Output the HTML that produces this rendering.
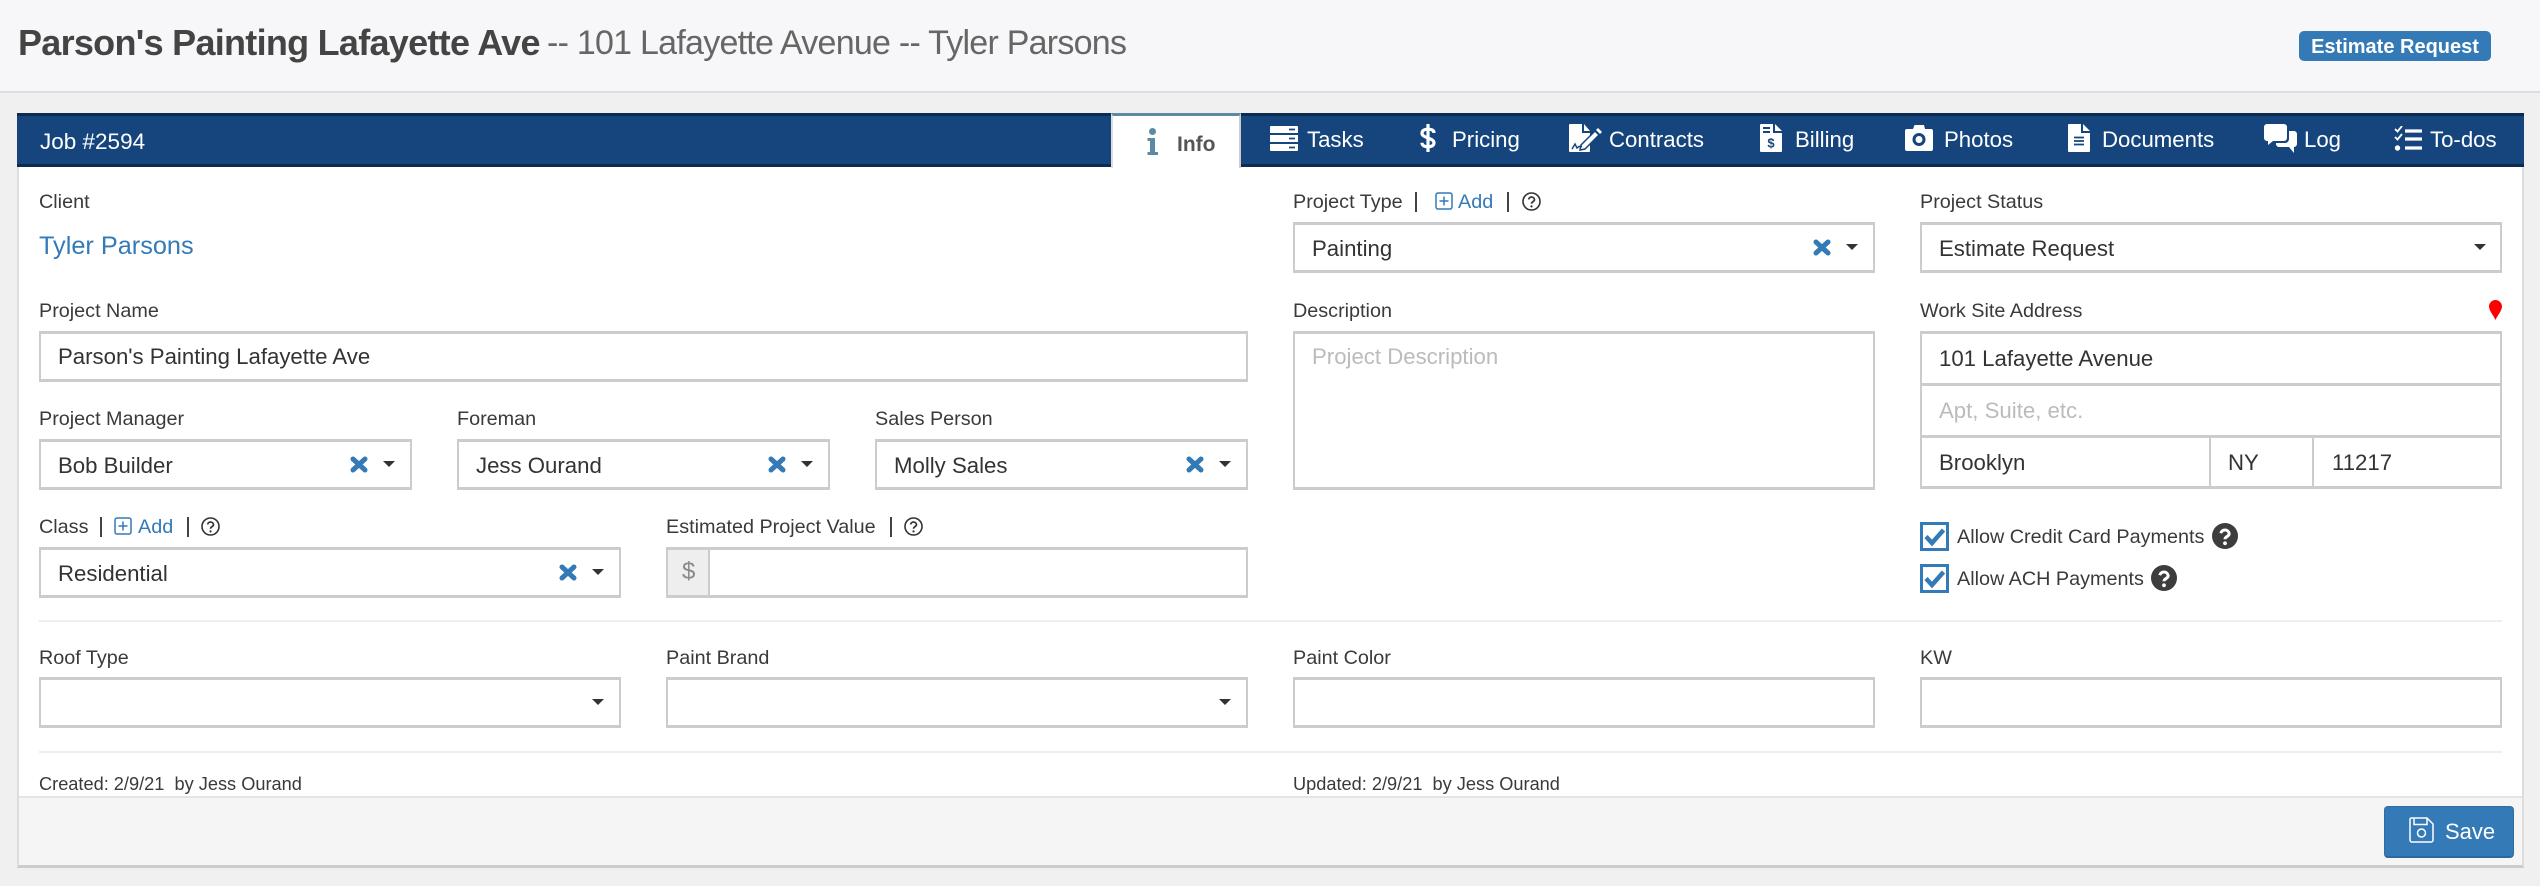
<!DOCTYPE html>
<html><head><meta charset="utf-8"><title>Job</title>
<style>
html,body{margin:0;padding:0;width:2540px;height:886px;overflow:hidden;background:#f0f0f0;font-family:"Liberation Sans",sans-serif;color:#333}
div,span,svg{position:absolute;box-sizing:border-box}
.t{white-space:nowrap;height:24px;line-height:24px}
.l{font-size:19.8px;color:#3a3a3a;margin-top:1px}
.v{font-size:22.2px;color:#333;margin-top:2px}
.i{margin-top:1px}
.p{font-size:22.2px;color:#bbb}
.n{font-size:22.2px;color:#fff}
.b{background:#fff;border:solid #ccc;border-width:3px 2px}
.hr{left:39px;width:2463px;height:2px;background:#eee}
.bar{width:2px;height:20px;background:#444}
</style></head><body>
<svg width="0" height="0" style="position:absolute">
<defs>
<symbol id="x" viewBox="0 0 18 17"><path d="M3 3 15 14M15 3 3 14" stroke="#337ab7" stroke-width="5" stroke-linecap="round" fill="none"/></symbol>
<symbol id="c" viewBox="0 0 12 6"><path d="M0 0H12L6 6Z" fill="#333"/></symbol>
<symbol id="q" viewBox="0 0 19 19"><circle cx="9.5" cy="9.5" r="8.5" fill="none" stroke="#333" stroke-width="1.6"/><path d="M6.6 7.4a3 3 0 0 1 5.9.2c0 2-3 2.2-3 4.2" fill="none" stroke="#333" stroke-width="1.7"/><circle cx="9.5" cy="14.4" r="1.1" fill="#333"/></symbol>
<symbol id="a" viewBox="0 0 18 18"><rect x="1" y="1" width="16" height="16" rx="2" fill="none" stroke="#337ab7" stroke-width="1.5"/><path d="M9 4.5v9M4.5 9h9" stroke="#337ab7" stroke-width="1.5"/></symbol>
<symbol id="ck" viewBox="0 0 29 29"><rect x="1.5" y="1.5" width="26" height="26" fill="#fff" stroke="#337ab7" stroke-width="3"/><path d="M6 14.500 12 21 23.500 8" fill="none" stroke="#337ab7" stroke-width="4.500"/></symbol>
<symbol id="qq" viewBox="0 0 26 26"><circle cx="13" cy="13" r="13" fill="#3d3d3d"/><path d="M8.800 10.200a4.300 4.300 0 0 1 8.400.4c0 3-4.200 2.900-4.200 5.600" fill="none" stroke="#fff" stroke-width="3"/><circle cx="13" cy="20.300" r="1.900" fill="#fff"/></symbol>
</defs></svg>

<!-- header -->
<div style="left:0;top:0;width:2540px;height:93px;background:#f7f7f9;border-bottom:2px solid #dcdde3"></div>
<span class="t" style="left:18px;top:26px;height:34px;line-height:34px;font-size:36px;font-weight:bold;color:#444;letter-spacing:-.72px">Parson's Painting Lafayette Ave</span>
<span class="t" style="left:547px;top:26px;height:34px;line-height:34px;font-size:34px;color:#666;letter-spacing:-.75px">-- 101 Lafayette Avenue -- Tyler Parsons</span>
<div style="left:2299px;top:31px;width:192px;height:30px;background:#337ab7;border-radius:5px"></div>
<span class="t" style="left:2299px;width:192px;text-align:center;top:35px;font-size:20px;font-weight:bold;color:#fff">Estimate Request</span>

<!-- panel -->
<div style="left:17px;top:113px;width:2507px;height:755px;background:#fff;border:2px solid #ddd;border-bottom:3px solid #ccc;border-top:0"></div>
<div style="left:17px;top:113px;width:2507px;height:54px;background:#15457c;border-top:3px solid #0d2b4e;border-bottom:3px solid #0d2b4e"></div>
<span class="t" style="left:40px;top:130px;font-size:22.500px;color:#fff">Job #2594</span>

<!-- tab active -->
<div style="left:1111px;top:113px;width:130px;height:55px;background:#fff;border-top:3px solid #5a8ba3;border-right:2px solid #ccc;border-left:2px solid #ddd"></div>
<svg style="left:1146px;top:128px" width="13" height="27" viewBox="0 0 13 27"><circle cx="6.500" cy="3.500" r="3.500" fill="#5a8ba3"/><path d="M1.500 10H9V24H12V27H1.500V24H4V13H1.500Z" fill="#5a8ba3"/></svg>
<span class="t" style="left:1177px;top:133px;font-size:21px;font-weight:bold;color:#555">Info</span>

<!-- tabs -->
<svg style="left:1270px;top:126px" width="28" height="25" viewBox="0 0 28 25"><path d="M1 0H27a1 1 0 0 1 1 1V7H0V1a1 1 0 0 1 1-1ZM0 9H28V16H0ZM0 18H28V24a1 1 0 0 1-1 1H1a1 1 0 0 1-1-1Z" fill="#fff"/><path d="M19 3.500H25M19 12.500H25M19 21.500H25" stroke="#15457c" stroke-width="1.800"/></svg>
<span class="t n" style="left:1307px;top:128px">Tasks</span>
<svg style="left:1420px;top:124px" width="16" height="28" viewBox="0 0 16 28"><path d="M14 9C14 6 11 5.200 8 5.200S2 6.200 2 9.200s4 3.800 6 4.800 6 1.800 6 4.800-3 4-6 4-6-1-6-4M8 0V28" fill="none" stroke="#fff" stroke-width="3.200"/></svg>
<span class="t n" style="left:1452px;top:128px">Pricing</span>
<svg style="left:1569px;top:124px" width="33" height="28" viewBox="0 0 33 28"><path d="M1 0H13V9H21V27a1 1 0 0 1-1 1H1a1 1 0 0 1-1-1V1a1 1 0 0 1 1-1ZM15 0 21 7H15Z" fill="#fff"/><path d="M12 21 26 7 30 11 16 25 11 26Z" fill="#fff" stroke="#15457c" stroke-width="1.500"/><path d="M27 6 29 4 33 8 31 10Z" fill="#fff"/><path d="M3 25 6 20 8 24 10 22.500H13" stroke="#15457c" stroke-width="1.500" fill="none"/></svg>
<span class="t n" style="left:1609px;top:128px">Contracts</span>
<svg style="left:1760px;top:124px" width="22" height="28" viewBox="0 0 22 28"><path d="M1 0H13V9H22V27a1 1 0 0 1-1 1H1a1 1 0 0 1-1-1V1a1 1 0 0 1 1-1ZM15 0 22 7H15Z" fill="#fff"/><path d="M3 4H10M3 8H10" stroke="#15457c" stroke-width="2"/><text x="11" y="23.500" text-anchor="middle" font-family="Liberation Sans" font-weight="bold" font-size="13" fill="#15457c">$</text></svg>
<span class="t n" style="left:1795px;top:128px">Billing</span>
<svg style="left:1905px;top:125px" width="28" height="26" viewBox="0 0 28 26"><path d="M2 4H8L9.500 0H19L20 4H26a2 2 0 0 1 2 2V24a2 2 0 0 1-2 2H2a2 2 0 0 1-2-2V6a2 2 0 0 1 2-2Z" fill="#fff"/><circle cx="14" cy="14.500" r="5" fill="none" stroke="#15457c" stroke-width="3"/></svg>
<span class="t n" style="left:1944px;top:128px">Photos</span>
<svg style="left:2068px;top:124px" width="22" height="28" viewBox="0 0 22 28"><path d="M1 0H13V9H22V27a1 1 0 0 1-1 1H1a1 1 0 0 1-1-1V1a1 1 0 0 1 1-1ZM15 0 22 7H15Z" fill="#fff"/><path d="M6 13.500H16M6 17H16M6 20.500H16" stroke="#15457c" stroke-width="1.700"/></svg>
<span class="t n" style="left:2102px;top:128px">Documents</span>
<svg style="left:2264px;top:124px" width="33" height="29" viewBox="0 0 33 29"><path d="M3 0H20a3 3 0 0 1 3 3V14a3 3 0 0 1-3 3H9L4 21V17H3a3 3 0 0 1-3-3V3a3 3 0 0 1 3-3Z" fill="#fff"/><path d="M25 7H30a3 3 0 0 1 3 3V20a3 3 0 0 1-3 3V29L25 23H15a3 3 0 0 1-3-3V19H21a4 4 0 0 0 4-4Z" fill="#fff"/></svg>
<span class="t n" style="left:2304px;top:128px">Log</span>
<svg style="left:2394px;top:126px" width="28" height="26" viewBox="0 0 28 26"><path d="M11 5H28M11 13H28M11 22H28" stroke="#fff" stroke-width="3.200"/><path d="M1 3 3.500 5.500 8 0M1 11 3.500 13.500 8 8" stroke="#fff" stroke-width="1.800" fill="none"/><circle cx="3.500" cy="22" r="2.700" fill="#fff"/></svg>
<span class="t n" style="left:2430px;top:128px">To-dos</span>

<!-- Col 1 -->
<span class="t l" style="left:39px;top:189px">Client</span>
<span class="t" style="left:39px;top:234px;font-size:25.300px;color:#337ab7">Tyler Parsons</span>

<span class="t l" style="left:39px;top:298px">Project Name</span>
<div class="b" style="left:39px;top:331px;width:1209px;height:51px"></div>
<span class="t v i" style="left:58px;top:344px">Parson's Painting Lafayette Ave</span>

<span class="t l" style="left:39px;top:406px">Project Manager</span>
<div class="b" style="left:39px;top:439px;width:373px;height:51px"></div>
<span class="t v" style="left:58px;top:452px">Bob Builder</span>
<svg style="left:350px;top:456px" width="18" height="17"><use href="#x"/></svg>
<svg style="left:383px;top:461px" width="12" height="6"><use href="#c"/></svg>

<span class="t l" style="left:457px;top:406px">Foreman</span>
<div class="b" style="left:457px;top:439px;width:373px;height:51px"></div>
<span class="t v" style="left:476px;top:452px">Jess Ourand</span>
<svg style="left:768px;top:456px" width="18" height="17"><use href="#x"/></svg>
<svg style="left:801px;top:461px" width="12" height="6"><use href="#c"/></svg>

<span class="t l" style="left:875px;top:406px">Sales Person</span>
<div class="b" style="left:875px;top:439px;width:373px;height:51px"></div>
<span class="t v" style="left:894px;top:452px">Molly Sales</span>
<svg style="left:1186px;top:456px" width="18" height="17"><use href="#x"/></svg>
<svg style="left:1219px;top:461px" width="12" height="6"><use href="#c"/></svg>

<span class="t l" style="left:39px;top:514px">Class</span>
<div class="bar" style="left:100px;top:517px"></div>
<svg style="left:114px;top:517px" width="18" height="18"><use href="#a"/></svg>
<span class="t l" style="left:138px;top:514px;color:#337ab7">Add</span>
<div class="bar" style="left:187px;top:517px"></div>
<svg style="left:201px;top:517px" width="19" height="19"><use href="#q"/></svg>
<div class="b" style="left:39px;top:547px;width:582px;height:51px"></div>
<span class="t v" style="left:58px;top:560px">Residential</span>
<svg style="left:559px;top:564px" width="18" height="17"><use href="#x"/></svg>
<svg style="left:592px;top:569px" width="12" height="6"><use href="#c"/></svg>

<span class="t l" style="left:666px;top:514px">Estimated Project Value</span>
<div class="bar" style="left:890px;top:517px"></div>
<svg style="left:904px;top:517px" width="19" height="19"><use href="#q"/></svg>
<div class="b" style="left:666px;top:547px;width:582px;height:51px"></div>
<div style="left:668px;top:550px;width:42px;height:45px;background:#eee;border-right:2px solid #ccc"></div>
<span class="t" style="left:682px;top:560px;font-size:24px;color:#888">$</span>

<!-- Col 3 -->
<span class="t l" style="left:1293px;top:189px">Project Type</span>
<div class="bar" style="left:1415px;top:192px"></div>
<svg style="left:1435px;top:192px" width="18" height="18"><use href="#a"/></svg>
<span class="t l" style="left:1458px;top:189px;color:#337ab7">Add</span>
<div class="bar" style="left:1507px;top:192px"></div>
<svg style="left:1522px;top:192px" width="19" height="19"><use href="#q"/></svg>
<div class="b" style="left:1293px;top:222px;width:582px;height:51px"></div>
<span class="t v" style="left:1312px;top:235px">Painting</span>
<svg style="left:1813px;top:239px" width="18" height="17"><use href="#x"/></svg>
<svg style="left:1846px;top:244px" width="12" height="6"><use href="#c"/></svg>

<span class="t l" style="left:1293px;top:298px">Description</span>
<div class="b" style="left:1293px;top:331px;width:582px;height:159px"></div>
<span class="t p" style="left:1312px;top:345px">Project Description</span>

<!-- Col 4 -->
<span class="t l" style="left:1920px;top:189px">Project Status</span>
<div class="b" style="left:1920px;top:222px;width:582px;height:51px"></div>
<span class="t v" style="left:1939px;top:235px">Estimate Request</span>
<svg style="left:2474px;top:244px" width="12" height="6"><use href="#c"/></svg>

<span class="t l" style="left:1920px;top:298px">Work Site Address</span>
<svg style="left:2489px;top:300px" width="13" height="20" viewBox="0 0 13 20"><path d="M6.500 0C10 0 13 3 13 6.500 13 10.500 8.500 15.500 6.500 20 4.500 15.500 0 10.500 0 6.500 0 3 3 0 6.500 0Z" fill="#f00"/></svg>
<div class="b" style="left:1920px;top:331px;width:582px;height:158px"></div>
<div style="left:1922px;top:383px;width:578px;height:3px;background:#ccc"></div>
<div style="left:1922px;top:435px;width:578px;height:3px;background:#ccc"></div>
<div style="left:2209px;top:436px;width:2px;height:50px;background:#ccc"></div>
<div style="left:2312px;top:436px;width:2px;height:50px;background:#ccc"></div>
<span class="t v i" style="left:1939px;top:346px">101 Lafayette Avenue</span>
<span class="t p" style="left:1939px;top:399px">Apt, Suite, etc.</span>
<span class="t v i" style="left:1939px;top:450px">Brooklyn</span>
<span class="t v i" style="left:2228px;top:450px">NY</span>
<span class="t v i" style="left:2332px;top:450px">11217</span>

<svg style="left:1920px;top:522px" width="29" height="29"><use href="#ck"/></svg>
<span class="t l" style="left:1957px;top:524px">Allow Credit Card Payments</span>
<svg style="left:2212px;top:523px" width="26" height="26"><use href="#qq"/></svg>
<svg style="left:1920px;top:564px" width="29" height="29"><use href="#ck"/></svg>
<span class="t l" style="left:1957px;top:566px">Allow ACH Payments</span>
<svg style="left:2151px;top:565px" width="26" height="26"><use href="#qq"/></svg>

<!-- row 2 -->
<div class="hr" style="top:620px"></div>
<span class="t l" style="left:39px;top:645px">Roof Type</span>
<div class="b" style="left:39px;top:677px;width:582px;height:51px"></div>
<svg style="left:592px;top:699px" width="12" height="6"><use href="#c"/></svg>
<span class="t l" style="left:666px;top:645px">Paint Brand</span>
<div class="b" style="left:666px;top:677px;width:582px;height:51px"></div>
<svg style="left:1219px;top:699px" width="12" height="6"><use href="#c"/></svg>
<span class="t l" style="left:1293px;top:645px">Paint Color</span>
<div class="b" style="left:1293px;top:677px;width:582px;height:51px"></div>
<span class="t l" style="left:1920px;top:645px">KW</span>
<div class="b" style="left:1920px;top:677px;width:582px;height:51px"></div>
<div class="hr" style="top:751px"></div>

<span class="t" style="left:39px;top:772px;font-size:18.200px;white-space:pre;color:#3a3a3a">Created: 2/9/21  by Jess Ourand</span>
<span class="t" style="left:1293px;top:772px;font-size:18.200px;white-space:pre;color:#3a3a3a">Updated: 2/9/21  by Jess Ourand</span>

<!-- footer -->
<div style="left:19px;top:796px;width:2503px;height:69px;background:#f5f5f5;border-top:2px solid #e5e5e5"></div>
<div style="left:2384px;top:806px;width:130px;height:52px;background:#337ab7;border-radius:4px;border:1px solid #2e6da4;border-bottom:2px solid #2b699f"></div>
<svg style="left:2409px;top:817px" width="25" height="26" viewBox="0 0 25 26"><path d="M2.500 1H18L24 7V23a2 2 0 0 1-2 2H3a2 2 0 0 1-2-2V2.500A1.500 1.500 0 0 1 2.500 1ZM5 1V7.500H18V1" fill="none" stroke="#fff" stroke-width="1.500"/><circle cx="12.500" cy="16" r="4" fill="none" stroke="#fff" stroke-width="1.500"/></svg>
<span class="t" style="left:2445px;top:820px;font-size:22px;color:#fff">Save</span>
</body></html>
